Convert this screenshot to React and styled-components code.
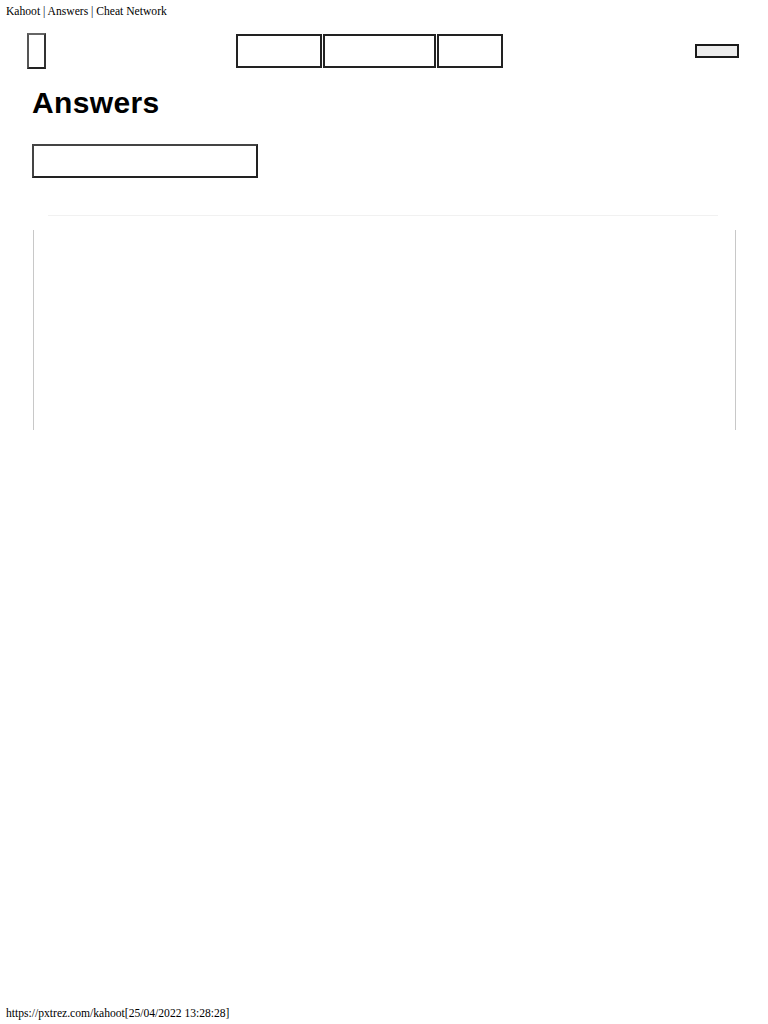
import React from "react";
import styled, { createGlobalStyle } from "styled-components";

const Global = createGlobalStyle`
  html, body { margin: 0; padding: 0; background: #fff; }
  body { font-family: "Liberation Serif", "Times New Roman", serif; color: #000; }
`;

const Page = styled.div`
  height: 1024px;
  display: flex;
  flex-direction: column;
  box-sizing: border-box;
`;

const PrintHeader = styled.div`
  font-size: 11.6px;
  line-height: 14px;
  padding: 5px 0 0 6px;
  height: 18px;
  box-sizing: border-box;
`;

const TopBar = styled.div`
  display: flex;
  align-items: flex-start;
  margin-top: 15px;
  padding-left: 27px;
  padding-right: 29px;
`;

const LogoBox = styled.div`
  width: 19px;
  height: 36px;
  box-sizing: border-box;
  border: 2px solid;
  border-color: #666 #333 #222 #555;
`;

const Nav = styled.div`
  display: flex;
  margin-left: 190px;
  margin-top: 1px;
`;

const NavItem = styled.div`
  width: ${(p) => p.$w}px;
  height: 34px;
  box-sizing: border-box;
  border: 2px solid #222;
  margin-right: 1px;
`;

const Spacer = styled.div`
  flex: 1;
`;

const SmallButton = styled.div`
  width: 44px;
  height: 14px;
  margin-top: 11px;
  box-sizing: border-box;
  border: 2px solid #1a1a1a;
  background: #ececec;
`;

const Main = styled.div`
  padding-left: 32px;
`;

const Title = styled.h1`
  margin: 16px 0 0 0;
  font-family: "Liberation Sans", Arial, sans-serif;
  font-weight: 700;
  font-size: 30px;
  line-height: 36px;
  letter-spacing: 0.35px;
`;

const SearchBox = styled.div`
  width: 226px;
  height: 34px;
  margin-top: 23px;
  box-sizing: border-box;
  border: 2px solid #222;
  border-top-color: #444;
  border-left-color: #444;
`;

const Divider = styled.div`
  margin: 37px 0 0 48px;
  width: 670px;
  height: 1px;
  background: #f1f1f1;
`;

const Panel = styled.div`
  margin: 14px 0 0 33px;
  width: 703px;
  height: 200px;
  box-sizing: border-box;
  border-left: 1px solid #c8c8c8;
  border-right: 1px solid #c8c8c8;
`;

const Footer = styled.div`
  margin-top: auto;
  font-size: 11.6px;
  line-height: 14px;
  padding: 0 0 1px 6px;
  height: 17px;
  box-sizing: border-box;
`;

export default function App() {
  return (
    <>
      <Global />
      <Page>
        <PrintHeader>Kahoot | Answers | Cheat Network</PrintHeader>
        <TopBar>
          <LogoBox />
          <Nav>
            <NavItem $w={86} />
            <NavItem $w={113} />
            <NavItem $w={66} />
          </Nav>
          <Spacer />
          <SmallButton />
        </TopBar>
        <Main>
          <Title>Answers</Title>
          <SearchBox />
        </Main>
        <Divider />
        <Panel />
        <Footer>https://pxtrez.com/kahoot[25/04/2022 13:28:28]</Footer>
      </Page>
    </>
  );
}
